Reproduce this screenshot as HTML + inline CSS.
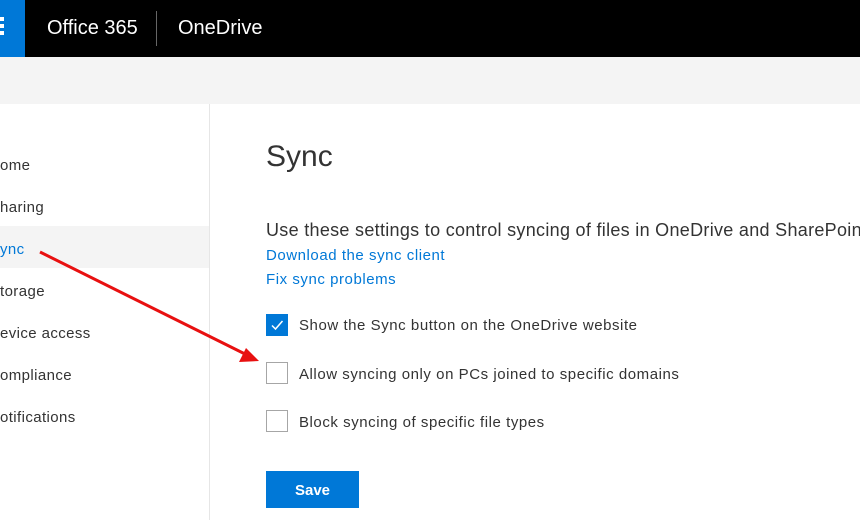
<!DOCTYPE html>
<html><head><style>
body{margin:0;width:860px;height:520px;overflow:hidden;background:#fff;font-family:"Liberation Sans",sans-serif;position:relative}
.top{position:absolute;left:0;top:0;width:860px;height:57px;background:#000}
.tile{position:absolute;left:0;top:0;width:25px;height:57px;background:#0078d7}
.dot{position:absolute;width:4px;height:4px;background:#fff}
.t{position:absolute;color:#fff;font-size:20px;top:17px}
.band{position:absolute;left:0;top:57px;width:860px;height:47px;background:#f4f4f4}
.side{position:absolute;left:209px;top:104px;width:1px;height:416px;background:#e6e6e6}
.nav{position:absolute;left:0;font-size:15px;color:#333;letter-spacing:0.4px}
.sel{position:absolute;left:0;top:226px;width:209px;height:42px;background:#f4f4f4}
.a{position:absolute;left:266px;font-size:15px;color:#0078d7;letter-spacing:0.55px}
.cb{position:absolute;left:266px;width:20px;height:20px;border:1px solid #a6a6a6;background:#fff}
.lb{position:absolute;left:299px;font-size:15px;color:#333;letter-spacing:0.55px}
</style></head><body>
<div class="top"></div>
<div class="tile">
<div class="dot" style="left:0;top:17px"></div><div class="dot" style="left:0;top:24px"></div><div class="dot" style="left:0;top:31px"></div>
</div>
<div class="t" style="left:47px">Office 365</div>
<div style="position:absolute;left:156px;top:11px;width:1px;height:35px;background:#666"></div>
<div class="t" style="left:178px">OneDrive</div>
<div class="band"></div>
<div class="side"></div>
<div class="sel"></div>
<div class="nav" style="top:157px">ome</div>
<div class="nav" style="top:199px">haring</div>
<div class="nav" style="top:241px;color:#0078d7">ync</div>
<div class="nav" style="top:283px">torage</div>
<div class="nav" style="top:325px">evice access</div>
<div class="nav" style="top:367px">ompliance</div>
<div class="nav" style="top:409px">otifications</div>
<div style="position:absolute;left:266px;top:140px;font-size:30px;color:#333">Sync</div>
<div style="position:absolute;left:266px;top:220px;font-size:18px;color:#333;white-space:nowrap;letter-spacing:0.3px">Use these settings to control syncing of files in OneDrive and SharePoint</div>
<div class="a" style="top:247px">Download the sync client</div>
<div class="a" style="top:271px">Fix sync problems</div>
<div class="cb" style="top:314px;background:#0078d7;border-color:#0078d7"><svg width="20" height="20"><path d="M5 10.5l3.5 3.5 7-8" stroke="#fff" stroke-width="1.5" fill="none"/></svg></div>
<div class="lb" style="top:317px">Show the Sync button on the OneDrive website</div>
<div class="cb" style="top:362px"></div>
<div class="lb" style="top:366px">Allow syncing only on PCs joined to specific domains</div>
<div class="cb" style="top:410px"></div>
<div class="lb" style="top:414px">Block syncing of specific file types</div>
<div style="position:absolute;left:266px;top:471px;width:93px;height:37px;background:#0078d7;color:#fff;font-size:15px;font-weight:bold;text-align:center;line-height:39px">Save</div>
<svg style="position:absolute;left:0;top:0" width="860" height="520"><line x1="40" y1="252" x2="245" y2="354" stroke="#e81010" stroke-width="3"/><polygon points="259,361 239,362 246,348" fill="#e81010"/></svg>
</body></html>
